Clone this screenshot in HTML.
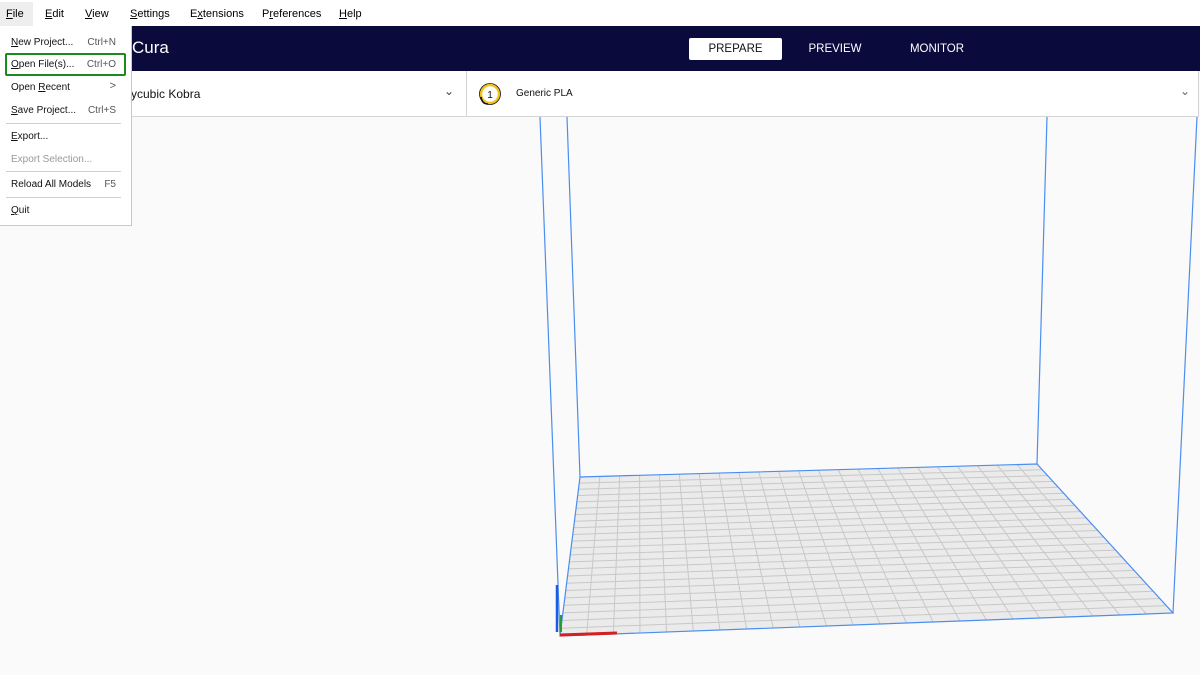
<!DOCTYPE html>
<html><head><meta charset="utf-8"><style>
body{margin:0;width:1200px;height:675px;overflow:hidden;background:#fafafa;font-family:"Liberation Sans",sans-serif;position:relative}
.menubar{position:absolute;left:0;top:0;width:1200px;height:26px;background:#fff;font-size:11px;color:#000}
.menubar span{position:absolute;top:8px}
.menubar .file{left:0;top:2px;width:33px;height:24px;background:#eee}
.hdr{position:absolute;left:0;top:26px;width:1200px;height:45px;background:#0b0a3d}
.tb{position:absolute;left:0;top:71px;width:1198px;height:45px;background:#fff;border-bottom:1px solid #d4d4d4;border-right:1px solid #d4d4d4}
.tab{position:absolute;top:12px;height:22px;line-height:22px;font-size:11.5px;color:#fff;text-align:center}
.menu{position:absolute;left:0;top:26px;width:131px;height:199px;background:#fff;border:1px solid #c8c8c8;border-left:none;border-top:none;font-size:10px;color:#111}
.it{position:absolute;left:11px}
.sc{position:absolute;right:15px;color:#555}
.sep{position:absolute;left:6px;width:115px;height:1px;background:#d0d0d0}
u{text-decoration:underline}
</style></head><body>
<svg width="1200" height="675" style="position:absolute;left:0;top:0">
<g id="grid"></g>
<g stroke="#4a8ef0" stroke-width="1.2" fill="none">
<line x1="540" y1="117" x2="560" y2="636"/>
<line x1="567" y1="117" x2="580" y2="477"/>
<line x1="1047" y1="117" x2="1037" y2="464"/>
<line x1="1197" y1="117" x2="1173" y2="613"/>
<polygon points="580,477 1037,464 1173,613 560,636"/>
</g>
<line x1="557" y1="585" x2="557" y2="632" stroke="#1e5be0" stroke-width="2.5"/>
<line x1="561" y1="615" x2="561" y2="632" stroke="#2a9a2a" stroke-width="2"/>
<line x1="560" y1="635" x2="617" y2="633" stroke="#d42020" stroke-width="3"/>
</svg>
<script>
(function(){
var P=[[580,477],[1037,464],[1173,613],[560,636]];
function pt(u,v){var tx=P[0][0]+(P[1][0]-P[0][0])*u,ty=P[0][1]+(P[1][1]-P[0][1])*u;var bx=P[3][0]+(P[2][0]-P[3][0])*u,by=P[3][1]+(P[2][1]-P[3][1])*u;return [tx+(bx-tx)*v,ty+(by-ty)*v];}
var g='<polygon points="580,477 1037,464 1173,613 560,636" fill="#ebebeb"/>';
var C=23,R=23;
function vv(t){return t*0.88/(1-0.12*t);}
for(var i=1;i<C;i++){var a=pt(i/C,0),b=pt(i/C,1);g+='<line x1="'+a[0]+'" y1="'+a[1]+'" x2="'+b[0]+'" y2="'+b[1]+'" stroke="#c8c8c8"/>';}
for(var j=1;j<R;j++){var v=vv(j/R);var a=pt(0,v),b=pt(1,v);g+='<line x1="'+a[0]+'" y1="'+a[1]+'" x2="'+b[0]+'" y2="'+b[1]+'" stroke="#c8c8c8"/>';}
document.getElementById('grid').innerHTML=g;
})();
</script>
<div class="menubar"><div class="file" style="position:absolute"></div>
<span style="left:6px"><u>F</u>ile</span><span style="left:45px"><u>E</u>dit</span><span style="left:85px"><u>V</u>iew</span><span style="left:130px"><u>S</u>ettings</span><span style="left:190px">E<u>x</u>tensions</span><span style="left:262px">P<u>r</u>eferences</span><span style="left:339px"><u>H</u>elp</span></div>
<div class="hdr">
<div style="position:absolute;left:132px;top:12px;color:#fff;font-size:17px">Cura</div>
<div class="tab" style="left:689px;width:93px;background:#fff;color:#111;border-radius:2px">PREPARE</div>
<div class="tab" style="left:800px;width:70px">PREVIEW</div>
<div class="tab" style="left:900px;width:74px">MONITOR</div>
</div>
<div class="tb">
<div style="position:absolute;left:131px;top:16px;font-size:12px;color:#111">ycubic Kobra</div>
<div style="position:absolute;left:444px;top:13px;font-size:12px;color:#444">⌄</div>
<div style="position:absolute;left:466px;top:0;width:1px;height:45px;background:#d4d4d4"></div>
<svg style="position:absolute;left:479px;top:12px" width="24" height="24"><circle cx="11" cy="11" r="9" fill="#fff" stroke="#f2c21b" stroke-width="2.5"/><circle cx="11" cy="11" r="10.5" fill="none" stroke="#111" stroke-width="0.8"/><path d="M2 14 Q3 21 9 21" stroke="#111" stroke-width="1.5" fill="none"/><text x="11" y="15" font-size="10" text-anchor="middle" font-family="Liberation Sans" fill="#111">1</text></svg>
<div style="position:absolute;left:516px;top:17px;font-size:10px;color:#111">Generic PLA</div>
<div style="position:absolute;left:1180px;top:13px;font-size:12px;color:#666">⌄</div>
</div>
<div class="menu">
<div class="it" style="top:11px"><u>N</u>ew Project...</div><div class="sc" style="top:11px">Ctrl+N</div>
<div style="position:absolute;left:5px;top:27px;width:117px;height:19px;border:2px solid #1d8a1d;border-radius:2px"></div>
<div class="it" style="top:33px"><u>O</u>pen File(s)...</div><div class="sc" style="top:33px">Ctrl+O</div>
<div class="it" style="top:56px">Open <u>R</u>ecent</div><div class="sc" style="top:54px;font-size:11px">&gt;</div>
<div class="it" style="top:79px"><u>S</u>ave Project...</div><div class="sc" style="top:79px">Ctrl+S</div>
<div class="sep" style="top:97px"></div>
<div class="it" style="top:105px"><u>E</u>xport...</div>
<div class="it" style="top:128px;color:#999">Export Selection...</div>
<div class="sep" style="top:145px"></div>
<div class="it" style="top:153px">Reload All Models</div><div class="sc" style="top:153px">F5</div>
<div class="sep" style="top:171px"></div>
<div class="it" style="top:179px"><u>Q</u>uit</div>
</div>
</body></html>
